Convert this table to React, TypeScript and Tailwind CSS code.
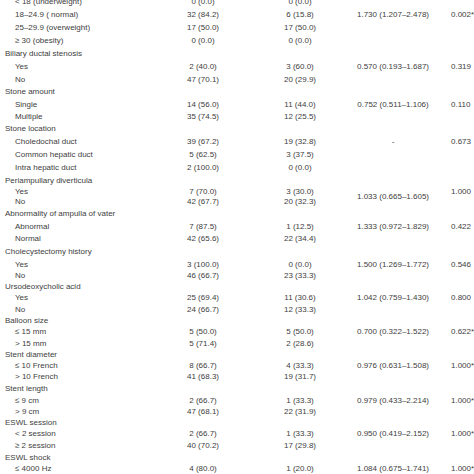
type Row = { label: string; a: string; b: string; or?: string; p?: string; h: string };
type Group = { title?: string; th?: string; rows: Row[]; spanOr?: boolean };

const groups: Group[] = [
  {
    rows: [
      { label: "< 18 (underweight)", a: "0 (0.0)", b: "0 (0.0)", h: "h-[13px]" },
      { label: "18–24.9 ( normal)", a: "32 (84.2)", b: "6 (15.8)", or: "1.730 (1.207–2.478)", p: "0.002*", h: "h-[13px]" },
      { label: "25–29.9 (overweight)", a: "17 (50.0)", b: "17 (50.0)", h: "h-[13px]" },
      { label: "≥ 30 (obesity)", a: "0 (0.0)", b: "0 (0.0)", h: "h-[13px]" },
    ],
  },
  {
    title: "Biliary ductal stenosis",
    th: "h-[13px]",
    rows: [
      { label: "Yes", a: "2 (40.0)", b: "3 (60.0)", or: "0.570 (0.193–1.687)", p: "0.319", h: "h-[13px]" },
      { label: "No", a: "47 (70.1)", b: "20 (29.9)", h: "h-[13px]" },
    ],
  },
  {
    title: "Stone amount",
    th: "h-[12.5px]",
    rows: [
      { label: "Single", a: "14 (56.0)", b: "11 (44.0)", or: "0.752 (0.511–1.106)", p: "0.110", h: "h-[13px]" },
      { label: "Multiple", a: "35 (74.5)", b: "12 (25.5)", h: "h-[11.5px]" },
    ],
  },
  {
    title: "Stone location",
    th: "h-[12.5px]",
    rows: [
      { label: "Choledochal duct", a: "39 (67.2)", b: "19 (32.8)", or: "-", p: "0.673", h: "h-[13px]" },
      { label: "Common hepatic duct", a: "5 (62.5)", b: "3 (37.5)", h: "h-[12.5px]" },
      { label: "Intra hepatic duct", a: "2 (100.0)", b: "0 (0.0)", h: "h-[13px]" },
    ],
  },
  {
    title: "Periampullary diverticula",
    th: "h-[13px]",
    spanOr: true,
    rows: [
      { label: "Yes", a: "7 (70.0)", b: "3 (30.0)", or: "1.033 (0.665–1.605)", p: "1.000", h: "h-[10px]" },
      { label: "No", a: "42 (67.7)", b: "20 (32.3)", h: "h-[10px]" },
    ],
  },
  {
    title: "Abnormality of ampulla of vater",
    th: "h-[14px]",
    rows: [
      { label: "Abnormal", a: "7 (87.5)", b: "1 (12.5)", or: "1.333 (0.972–1.829)", p: "0.422", h: "h-[12px]" },
      { label: "Normal", a: "42 (65.6)", b: "22 (34.4)", h: "h-[12px]" },
    ],
  },
  {
    title: "Cholecystectomy history",
    th: "h-[14px]",
    rows: [
      { label: "Yes", a: "3 (100.0)", b: "0 (0.0)", or: "1.500 (1.269–1.772)", p: "0.546", h: "h-[11px]" },
      { label: "No", a: "46 (66.7)", b: "23 (33.3)", h: "h-[11px]" },
    ],
  },
  {
    title: "Ursodeoxycholic acid",
    th: "h-[11.5px]",
    rows: [
      { label: "Yes", a: "25 (69.4)", b: "11 (30.6)", or: "1.042 (0.759–1.430)", p: "0.800", h: "h-[11.5px]" },
      { label: "No", a: "24 (66.7)", b: "12 (33.3)", h: "h-[11px]" },
    ],
  },
  {
    title: "Balloon size",
    th: "h-[11.5px]",
    rows: [
      { label: "≤ 15 mm", a: "5 (50.0)", b: "5 (50.0)", or: "0.700 (0.322–1.522)", p: "0.622*", h: "h-[11px]" },
      { label: "> 15 mm", a: "5 (71.4)", b: "2 (28.6)", h: "h-[12px]" },
    ],
  },
  {
    title: "Stent diameter",
    th: "h-[11px]",
    rows: [
      { label: "≤ 10 French", a: "8 (66.7)", b: "4 (33.3)", or: "0.976 (0.631–1.508)", p: "1.000*", h: "h-[11px]" },
      { label: "> 10 French", a: "41 (68.3)", b: "19 (31.7)", h: "h-[11.5px]" },
    ],
  },
  {
    title: "Stent length",
    th: "h-[12px]",
    rows: [
      { label: "≤ 9 cm", a: "2 (66.7)", b: "1 (33.3)", or: "0.979 (0.433–2.214)", p: "1.000*", h: "h-[11.5px]" },
      { label: "> 9 cm", a: "47 (68.1)", b: "22 (31.9)", h: "h-[11px]" },
    ],
  },
  {
    title: "ESWL session",
    th: "h-[11px]",
    rows: [
      { label: "< 2 session", a: "2 (66.7)", b: "1 (33.3)", or: "0.950 (0.419–2.152)", p: "1.000*", h: "h-[11.5px]" },
      { label: "≥ 2 session", a: "40 (70.2)", b: "17 (29.8)", h: "h-[12px]" },
    ],
  },
  {
    title: "ESWL shock",
    th: "h-[11px]",
    rows: [
      { label: "≤ 4000 Hz", a: "4 (80.0)", b: "1 (20.0)", or: "1.084 (0.675–1.741)", p: "1.000*", h: "h-[12px]" },
    ],
  },
];

function Cell({ children, center, h, className = "" }: { children?: React.ReactNode; center?: boolean; h?: string; className?: string }) {
  return (
    <div className={`flex items-center whitespace-nowrap ${center ? "justify-center" : ""} ${h ?? ""} ${className}`}>
      {children}
    </div>
  );
}

export default function App() {
  return (
    <div className="w-[474px] h-[474px] overflow-hidden bg-white font-['Liberation_Sans',Arial,sans-serif] text-[8px] leading-none text-[#404040]">
      <div className="mt-[-5px]">
        {groups.map((g, gi) => (
          <div key={gi}>
            {g.title && <Cell h={g.th} className="pl-[5px]">{g.title}</Cell>}
            <div className="grid grid-cols-[166px_74px_120px_66px_1fr]">
              {g.rows.map((r, ri) => (
                <div key={ri} className="contents">
                  <Cell h={r.h} className="pl-[15px]">{r.label}</Cell>
                  <Cell center>{r.a}</Cell>
                  <Cell center>{r.b}</Cell>
                  {g.spanOr ? (
                    ri === 0 && <Cell center className="row-span-2">{r.or}</Cell>
                  ) : (
                    <Cell center>{r.or}</Cell>
                  )}
                  <Cell className={`pl-[25px] ${g.spanOr ? "items-start pt-px" : ""}`}>{r.p}</Cell>
                </div>
              ))}
            </div>
          </div>
        ))}
      </div>
    </div>
  );
}
